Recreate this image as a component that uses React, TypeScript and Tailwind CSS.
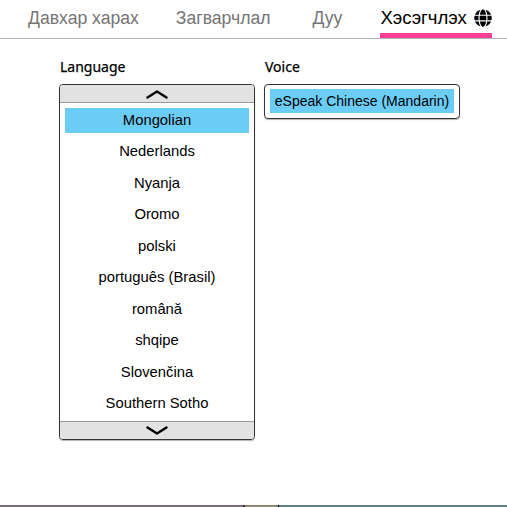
import { FaGlobe } from 'react-icons/fa';

const LANGUAGES = [
  'Nederlands',
  'Nyanja',
  'Oromo',
  'polski',
  'português (Brasil)',
  'română',
  'shqipe',
  'Slovenčina',
  'Southern Sotho',
];

function Chevron({ up }: { up?: boolean }) {
  return (
    <svg width="22" height="10" viewBox="0 0 22 10" fill="none" stroke="#000" strokeWidth="2.4" strokeLinecap="round" strokeLinejoin="round">
      <path d={up ? 'M1.5 8.5 L11 2.5 L20.5 8.5' : 'M1.5 1.5 L11 7.5 L20.5 1.5'} />
    </svg>
  );
}

export default function App() {
  return (
    <div className="relative flex h-[507px] w-[507px] flex-col overflow-hidden bg-white font-['Liberation_Sans',sans-serif] text-black">
      {/* tab bar */}
      <div className="flex h-[39px] shrink-0 items-stretch border-b border-[#b0b0b0] pl-[28px] text-[17.6px]">
        <div className="flex h-[37px] items-center text-[#757575]">Давхар харах</div>
        <div className="ml-[37px] flex h-[37px] items-center text-[#757575]">Загварчлал</div>
        <div className="ml-[42px] flex h-[37px] items-center text-[#757575]">Дуу</div>
        <div className="ml-[38px] flex h-[38px] w-[112px] items-center justify-between border-b-[5px] border-[#fb3f94] pt-[3px] text-[18.5px]">
          <span>Хэсэгчлэх</span>
          <FaGlobe className="h-[18px] w-[18px]" />
        </div>
      </div>

      <div className="flex flex-1 items-start pl-[59px] pt-[18px]">
        {/* language list */}
        <div className="w-[196px]">
          <div className="mb-[8px] ml-px h-[19px] font-['Noto_Sans',sans-serif] text-[14px] leading-[19px] [-webkit-text-stroke:0.25px_black]">Language</div>
          <div className="overflow-hidden rounded-[4px] border border-[#333] shadow-[0_1px_1px_rgba(0,0,0,0.3)]">
            <div className="flex h-[18px] items-center justify-center border-b border-[#999] bg-[#e2e2e2]">
              <Chevron up />
            </div>
            <div className="flex h-[317.5px] flex-col px-[5px] pt-[5px] text-[14.8px]">
              <div className="flex h-[25px] shrink-0 items-center justify-center bg-[#6bcdf6]">Mongolian</div>
              {LANGUAGES.map((name) => (
                <div key={name} className="flex h-[31.5px] shrink-0 items-center justify-center pt-[5.5px]">
                  {name}
                </div>
              ))}
            </div>
            <div className="flex h-[18px] items-center justify-center border-t border-[#999] bg-[#e2e2e2] pt-px">
              <Chevron />
            </div>
          </div>
        </div>

        {/* voice list */}
        <div className="ml-[9px] w-[196px]">
          <div className="mb-[8px] ml-px h-[19px] font-['Noto_Sans',sans-serif] text-[14px] leading-[19px] [-webkit-text-stroke:0.25px_black]">Voice</div>
          <div className="rounded-[4px] border border-[#333] px-[5px] pb-[5px] pt-[4px] shadow-[0_1px_1px_rgba(0,0,0,0.3)]">
            <div className="flex h-[24px] items-center justify-center whitespace-nowrap bg-[#6bcdf6] text-[14px]">
              eSpeak Chinese (Mandarin)
            </div>
          </div>
        </div>
      </div>

      {/* strip of the window behind */}
      <div className="flex h-[2px] shrink-0">
        <div className="w-[243px] bg-[#7d6a7d]" />
        <div className="w-[2px] bg-[#333]" />
        <div className="w-[33px] bg-[#8b8a70]" />
        <div className="w-[1px] bg-black" />
        <div className="flex-1 bg-[#5f7f88]" />
      </div>
    </div>
  );
}
